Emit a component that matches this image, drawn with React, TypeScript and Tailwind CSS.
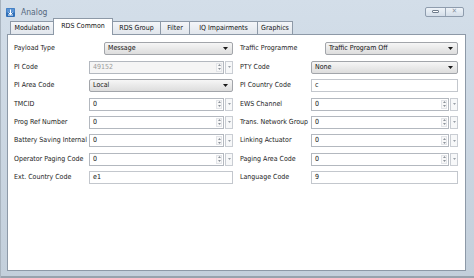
import React from "react";

function DownTri({ w = 5, h = 3 }: { w?: number; h?: number }) {
  return (
    <svg width={w} height={h} viewBox={`0 0 ${w} ${h}`}>
      <path d={`M0 0H${w}L${w / 2} ${h}Z`} fill="currentColor" />
    </svg>
  );
}

function UpTri({ w = 3, h = 2 }: { w?: number; h?: number }) {
  return (
    <svg width={w} height={h} viewBox={`0 0 ${w} ${h}`}>
      <path d={`M0 ${h}H${w}L${w / 2} 0Z`} fill="currentColor" />
    </svg>
  );
}

function Combo({ value, indent }: { value: string; indent?: string }) {
  return (
    <div
      className={`flex h-[13px] flex-1 items-center justify-between rounded-[2px] border border-[#a2a5aa] bg-gradient-to-b from-[#f6f6f6] to-[#dddddd] pl-[3px] pr-[4px] text-[#111] ${indent ?? ""}`}
    >
      <span>{value}</span>
      <span className="text-[#1a1a1a]">
        <DownTri w={5} h={3} />
      </span>
    </div>
  );
}

function LineEdit({ value }: { value: string }) {
  return (
    <div className="flex h-[13px] flex-1 items-center border border-[#c3c7cd] bg-white pl-[3px] text-[#111]">
      {value}
    </div>
  );
}

function Spin({ value, disabled }: { value: string; disabled?: boolean }) {
  return (
    <div className="flex h-[13px] flex-1 gap-[1px]">
      <div
        className={`flex flex-1 items-stretch border border-[#b3b8bf] ${
          disabled ? "bg-[#f5f5f5] text-[#9b9b9b]" : "bg-white text-[#111]"
        }`}
      >
        <span className="flex flex-1 items-center pl-[3px]">{value}</span>
        <div className="my-[1px] mr-[1px] flex w-[6px] flex-col items-center justify-center gap-[2px] border border-[#e2e4e8] bg-[#f8f8f8] text-[#8d939b]">
          <UpTri w={3} h={2} />
          <DownTri w={3} h={2} />
        </div>
      </div>
      <div className="flex w-[8px] items-center justify-center border border-[#c9cdd3] bg-[#f7f8f9] text-[#9aa0a8]">
        <DownTri w={3} h={2} />
      </div>
    </div>
  );
}

function Row({
  label,
  labelW,
  children,
}: {
  label: string;
  labelW: string;
  children: React.ReactNode;
}) {
  return (
    <div className="flex h-[18.45px] items-center">
      <span className={`${labelW} shrink-0 whitespace-nowrap text-[#1b1b1b]`}>{label}</span>
      {children}
    </div>
  );
}

const tabs = [
  { name: "Modulation", w: "w-[44px]" },
  { name: "RDS Common", w: "w-[60px]", active: true },
  { name: "RDS Group", w: "w-[49px]" },
  { name: "Filter", w: "w-[30px]" },
  { name: "IQ Impairments", w: "w-[69px]" },
  { name: "Graphics", w: "w-[36px]" },
];

export default function App() {
  return (
    <div className="flex h-[278px] w-[474px] flex-col overflow-hidden border-l border-[#a9b4bf] bg-gradient-to-b from-[#d3dee9] to-[#c3cfdb] font-['DejaVu_Sans_Condensed','Liberation_Sans',sans-serif] text-[7px] leading-none">
      {/* title bar */}
      <div className="flex h-[21px] shrink-0 items-center pl-[5px] pr-[10px]">
        <svg width="9" height="9" viewBox="0 0 9 9" className="mt-[3px]">
          <rect width="9" height="9" rx="1" fill="#2f6fb8" />
          <rect x="0.5" y="0.5" width="8" height="4" fill="#5b93d3" />
          <path d="M4.5 1.5V6.5M2 7H7M2.5 4.5L4.5 6.5L6.5 4.5" stroke="#fff" strokeWidth="1" fill="none" />
        </svg>
        <span className="ml-[6px] mt-[4px] text-[8.5px] text-[#56687d]">Analog</span>
        <div className="ml-auto mt-[2px] flex h-[10px] overflow-hidden rounded-[2px] border border-[#8e9cad] bg-gradient-to-b from-[#eef3f8] to-[#d4dee9]">
          <div className="flex w-[20px] items-center justify-center border-r border-[#9aa7b6]">
            <div className="h-[3px] w-[7px] rounded-[1px] border border-[#6f7c8c] bg-white" />
          </div>
          <div className="flex w-[17px] items-center justify-center text-[7px] text-[#8a94a2]">✕</div>
        </div>
      </div>

      {/* tab strip */}
      <div className="flex h-[13px] shrink-0 items-end pl-[9px]">
        {tabs.map((t) =>
          t.active ? (
            <div
              key={t.name}
              className={`${t.w} relative z-10 -mb-[1px] -ml-[1px] flex h-[17px] items-center justify-center border border-b-0 border-[#8d99a7] bg-white pb-[1px] text-[#111]`}
            >
              {t.name}
            </div>
          ) : (
            <div
              key={t.name}
              className={`${t.w} -ml-[1px] flex h-[13px] items-center justify-center border border-b-0 border-[#8d99a7] bg-gradient-to-b from-[#f4f6f9] to-[#e1e6ec] text-[#111] first:ml-0`}
            >
              {t.name}
            </div>
          )
        )}
      </div>

      {/* panel */}
      <div className="ml-[6px] h-[237px] w-[459px] shrink-0 border border-[#8d99a7] bg-white pl-[6px] pr-[7px] pt-[4.5px]">
        <div className="grid grid-cols-[219px_218px] gap-x-[7px]">
          <div className="flex flex-col">
            <Row label="Payload Type" labelW="w-[75px]">
              <Combo value="Message" indent="ml-[15px]" />
            </Row>
            <Row label="PI Code" labelW="w-[75px]">
              <Spin value="49152" disabled />
            </Row>
            <Row label="PI Area Code" labelW="w-[75px]">
              <Combo value="Local" />
            </Row>
            <Row label="TMCID" labelW="w-[75px]">
              <Spin value="0" />
            </Row>
            <Row label="Prog Ref Number" labelW="w-[75px]">
              <Spin value="0" />
            </Row>
            <Row label="Battery Saving Internal" labelW="w-[75px]">
              <Spin value="0" />
            </Row>
            <Row label="Operator Paging Code" labelW="w-[75px]">
              <Spin value="0" />
            </Row>
            <Row label="Ext. Country Code" labelW="w-[75px]">
              <LineEdit value="e1" />
            </Row>
          </div>
          <div className="flex flex-col">
            <Row label="Traffic Programme" labelW="w-[71px]">
              <Combo value="Traffic Program Off" indent="ml-[14px]" />
            </Row>
            <Row label="PTY Code" labelW="w-[71px]">
              <Combo value="None" />
            </Row>
            <Row label="PI Country Code" labelW="w-[71px]">
              <LineEdit value="c" />
            </Row>
            <Row label="EWS Channel" labelW="w-[71px]">
              <Spin value="0" />
            </Row>
            <Row label="Trans. Network Group" labelW="w-[71px]">
              <Spin value="0" />
            </Row>
            <Row label="Linking Actuator" labelW="w-[71px]">
              <Spin value="0" />
            </Row>
            <Row label="Paging Area Code" labelW="w-[71px]">
              <Spin value="0" />
            </Row>
            <Row label="Language Code" labelW="w-[71px]">
              <LineEdit value="9" />
            </Row>
          </div>
        </div>
      </div>

      <div className="mt-auto h-[2px] bg-[#97a2ad]" />
    </div>
  );
}
